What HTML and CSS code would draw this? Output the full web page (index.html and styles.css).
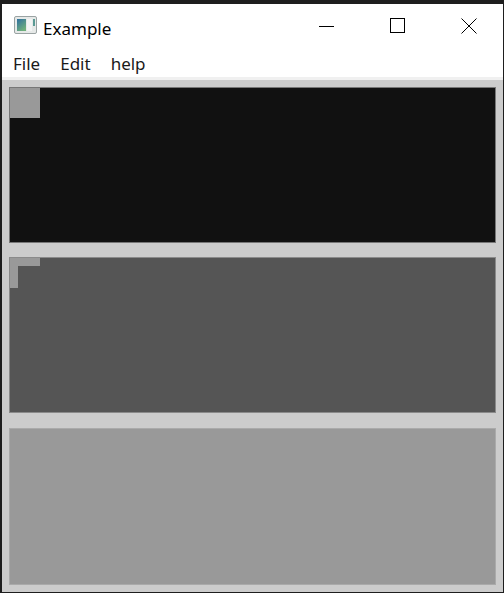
FILE: index.html
```html
<!DOCTYPE html>
<html lang="en">
<head>
<meta charset="UTF-8">
<meta name="viewport" content="width=device-width, initial-scale=1.0">
<title>Example</title>
<link rel="stylesheet" href="styles.css">
</head>
<body>

<div class="window">
  <!-- Title bar -->
  <div class="titlebar">
    <svg class="app-icon" width="24" height="20" viewBox="0 0 24 20">
      <defs>
        <linearGradient id="pane" x1="0" y1="0" x2="0.6" y2="1">
          <stop offset="0" stop-color="#2f6f9f"/>
          <stop offset="1" stop-color="#6fb07c"/>
        </linearGradient>
      </defs>
      <rect x="0.5" y="0.5" width="22" height="17" rx="1.5" fill="#e6e9e8" stroke="#9aa3a3"/>
      <rect x="3" y="3" width="9" height="12" fill="url(#pane)"/>
      <rect x="13" y="3" width="5" height="12" fill="#f3f4f4"/>
      <rect x="19" y="3" width="2" height="7" fill="#5a9a94"/>
    </svg>
    <span class="title">Example</span>
    <div class="controls">
      <svg class="control" width="16" height="16" viewBox="0 0 16 16">
        <path d="M0 8.5H15" stroke="#000" fill="none"/>
      </svg>
      <svg class="control" width="16" height="16" viewBox="0 0 16 16">
        <rect x="0.5" y="0.5" width="14" height="14" stroke="#000" fill="none"/>
      </svg>
      <svg class="control" width="16" height="16" viewBox="0 0 16 16">
        <path d="M0.5 0.5L15.5 15.5M15.5 0.5L0.5 15.5" stroke="#000" fill="none"/>
      </svg>
    </div>
  </div>

  <!-- Menu -->
  <div class="menubar">
    <span>File</span>
    <span>Edit</span>
    <span>help</span>
  </div>

  <!-- Panels -->
  <div class="content">
    <div class="panel panel-dark"><div class="corner corner-full"></div></div>
    <div class="panel panel-mid"><div class="corner corner-outline"></div></div>
    <div class="panel panel-light"></div>
  </div>
</div>

</body>
</html>
```

FILE: styles.css
```css
html, body {
    margin: 0;
    height: 100%;
}
body {
    background-color: #1e1e1e;
    font-family: "Noto Sans", "Open Sans", sans-serif;
    color: #1a1a1a;
    padding: 4px 1px 1px 2px;
    box-sizing: border-box;
    overflow: hidden;
}
.window {
    height: 588px;
    background-color: #fff;
    display: flex;
    flex-direction: column;
}
.titlebar {
    height: 46px;
    display: flex;
    align-items: center;
    padding-left: 12px;
    box-sizing: border-box;
    flex: none;
}
.app-icon {
    flex: none;
    margin-right: 5px;
    margin-bottom: 2px;
}
.title {
    font-size: 17px;
    color: #000;
    padding-top: 2px;
}
.controls {
    margin-left: auto;
    display: flex;
    gap: 55px;
    padding-right: 26px;
    padding-bottom: 2px;
}
.control {
    display: block;
}
.menubar {
    height: 27px;
    display: flex;
    align-items: center;
    gap: 20px;
    padding-left: 11px;
    font-size: 17px;
    flex: none;
}
.content {
    flex: 1;
    background-color: #cccccc;
    border-top: 3px solid #f0f0f0;
    padding: 7px;
    display: flex;
    flex-direction: column;
    gap: 14px;
}
.panel {
    height: 154px;
    flex: none;
    border: 1px solid #777;
}
.panel-dark {
    background-color: #111111;
}
.panel-mid {
    background-color: #555555;
    border-color: #8a8a8a;
}
.panel-light {
    height: 155px;
    margin-top: 1px;
    background-color: #999999;
    border-color: #aaaaaa;
}
.corner {
    width: 30px;
    height: 30px;
    box-sizing: border-box;
}
.corner-full {
    background-color: #999999;
}
.corner-outline {
    border-top: 8px solid #999999;
    border-left: 8px solid #999999;
}
```
